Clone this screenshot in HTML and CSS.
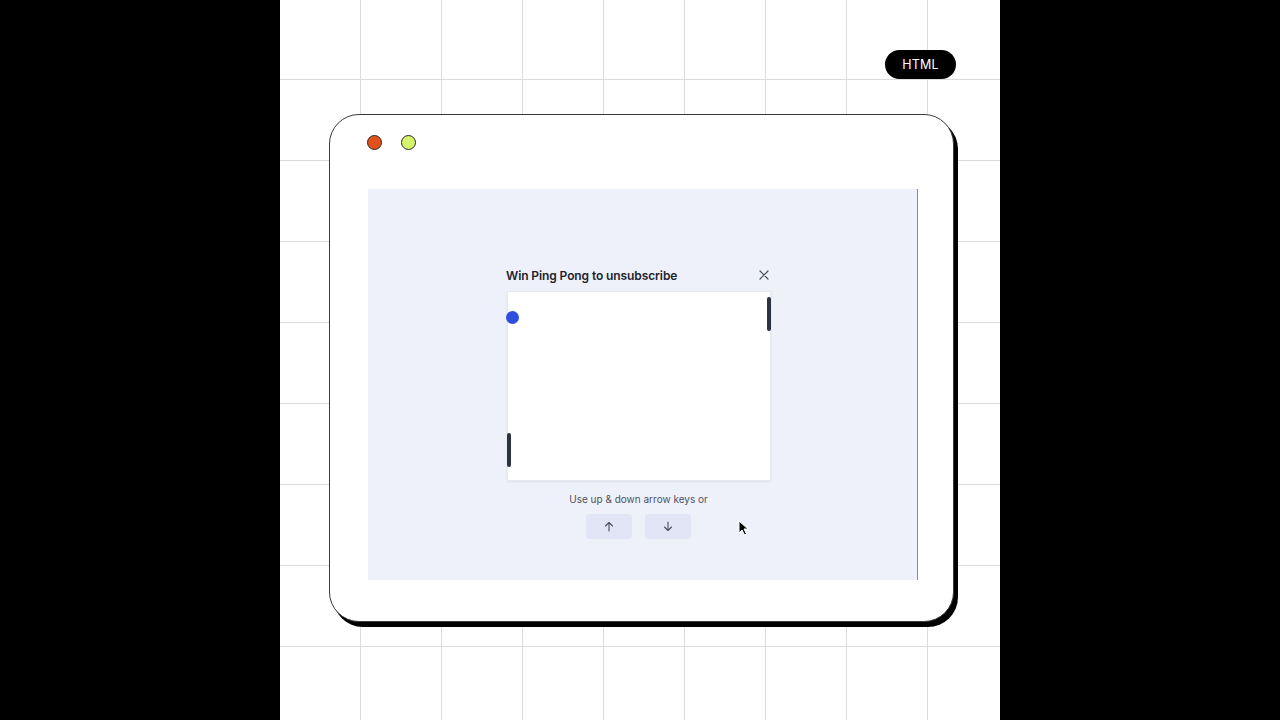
FILE: index.html
```html
<!DOCTYPE html>
<html lang="en">
<head>
<meta charset="utf-8">
<title>Win Ping Pong to unsubscribe</title>
<link rel="stylesheet" href="styles.css">
</head>
<body>
<div class="stage">
  <div class="badge-row"><span class="badge">HTML</span></div>
  <div class="window">
    <div class="dots">
      <span class="dot dot-red"></span>
      <span class="dot dot-lime"></span>
    </div>
    <div class="viewport">
      <div class="dialog">
        <div class="dialog-head">
          <span class="dialog-title">Win Ping Pong to unsubscribe</span>
          <svg class="close" width="10" height="10" viewBox="0 0 10 10"><path d="M1 1L9 9M9 1L1 9" stroke="#4a4f5c" stroke-width="1.2" stroke-linecap="round"/></svg>
        </div>
        <div class="court">
          <span class="ball"></span>
          <span class="paddle paddle-right"></span>
          <span class="paddle paddle-left"></span>
        </div>
        <p class="hint">Use up &amp; down arrow keys or</p>
        <div class="controls">
          <button class="key" type="button"><svg width="10" height="11" viewBox="0 0 10 11"><path d="M5 10V1.5M1.5 5L5 1.5L8.5 5" fill="none" stroke="#4a4f5c" stroke-width="1.1" stroke-linecap="round" stroke-linejoin="round"/></svg></button>
          <button class="key" type="button"><svg width="10" height="11" viewBox="0 0 10 11"><path d="M5 1V9.5M1.5 6L5 9.5L8.5 6" fill="none" stroke="#4a4f5c" stroke-width="1.1" stroke-linecap="round" stroke-linejoin="round"/></svg></button>
          <svg class="cursor" width="12" height="16" viewBox="0 0 12 16"><path d="M1 1V13L4 10L6.5 15L8.5 14L6 9H10Z" fill="#000" stroke="#fff" stroke-width="1" stroke-linejoin="round"/></svg>
        </div>
      </div>
    </div>
  </div>
</div>
</body>
</html>
```

FILE: styles.css
```css
* { box-sizing: border-box; }
html, body { margin: 0; padding: 0; }
body {
  background: #000;
  display: flex;
  justify-content: center;
  font-family: Inter, "Noto Sans", "Liberation Sans", sans-serif;
}
.stage {
  width: 720px;
  height: 720px;
  background-color: #fff;
  background-image:
    linear-gradient(to right, #dcdcdc 1px, transparent 1px),
    linear-gradient(to bottom, #dcdcdc 1px, transparent 1px);
  background-size: 81px 81px;
  background-position: 80px 79px;
  padding-top: 50px;
  display: flex;
  flex-direction: column;
}
.badge-row {
  display: flex;
  justify-content: flex-end;
  padding-right: 44px;
}
.badge {
  display: flex;
  align-items: center;
  justify-content: center;
  width: 71px;
  height: 29px;
  border-radius: 15px;
  background: #000;
  color: #fff;
  font-size: 12.5px;
  letter-spacing: 0.2px;
}
.window {
  margin-top: 35px;
  margin-left: 49px;
  width: 625px;
  height: 508px;
  background: #fff;
  border: 1.5px solid #3a3a3a;
  border-radius: 30px;
  box-shadow: 4px 5px 0 #000;
  padding: 20px 0 0 38px;
}
.dots {
  display: flex;
  gap: 19px;
  margin-left: -1.5px;
}
.dot {
  width: 15px;
  height: 15px;
  border-radius: 50%;
  border: 1px solid #2a2a2a;
}
.dot-red { background: #e2501c; }
.dot-lime { background: #d6f56b; }
.viewport {
  margin-top: 39px;
  width: 550px;
  height: 391px;
  background: #eef1f9;
  border-right: 1px solid #8d8d8d;
  padding: 78px 0 0 138px;
}
.dialog {
  width: 265px;
  display: flex;
  flex-direction: column;
  align-items: center;
}
.dialog-head {
  width: 100%;
  display: flex;
  align-items: center;
  justify-content: space-between;
  height: 16px;
  padding-right: 2px;
}
.dialog-title {
  font-size: 12px;
  font-weight: 600;
  color: #1e2330;
  letter-spacing: -0.1px;
}
.close { display: block; }
.court {
  position: relative;
  margin-top: 8px;
  align-self: flex-end;
  width: 264px;
  height: 190px;
  background: #fff;
  border: 1px solid #e6e9f1;
  box-shadow: 0 1px 2px rgba(30, 40, 80, 0.08);
}
.ball {
  position: absolute;
  left: -2px;
  top: 19px;
  width: 13px;
  height: 13px;
  border-radius: 50%;
  background: #2e4ee0;
}
.paddle {
  position: absolute;
  width: 4px;
  height: 34px;
  border-radius: 2px;
  background: #2d3240;
}
.paddle-right { right: -1px; top: 5px; }
.paddle-left { left: -1px; top: 141px; }
.hint {
  margin: 12px 0 0;
  font-size: 10px;
  line-height: 12px;
  color: #4d5262;
}
.controls {
  position: relative;
  margin-top: 9px;
  display: flex;
  gap: 13px;
}
.key {
  width: 46px;
  height: 25px;
  border: 0;
  border-radius: 4px;
  background: #e2e5f6;
  display: flex;
  align-items: center;
  justify-content: center;
  padding: 0;
}
.key svg { display: block; }
.cursor {
  position: absolute;
  left: 152px;
  top: 6px;
}
```
